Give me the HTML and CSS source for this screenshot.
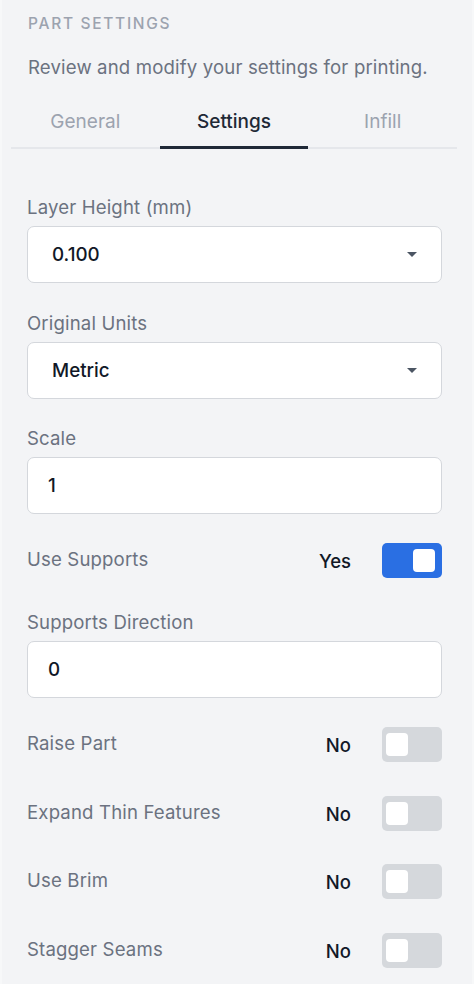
FILE: index.html
```html
<!DOCTYPE html>
<html lang="en">
<head>
<meta charset="utf-8">
<title>Part Settings</title>
<link rel="stylesheet" href="styles.css">
</head>
<body>
<div class="panel">
  <div class="header">
    <div class="eyebrow">Part Settings</div>
    <p class="subtitle">Review and modify your settings for printing.</p>
  </div>
  <div class="tabs">
    <div class="tab">General</div>
    <div class="tab active">Settings</div>
    <div class="tab">Infill</div>
  </div>
  <div class="form">
    <div class="field first">
      <div class="label">Layer Height (mm)</div>
      <div class="control select"><span class="value">0.100</span><span class="caret"></span></div>
    </div>
    <div class="field f2">
      <div class="label">Original Units</div>
      <div class="control select"><span class="value">Metric</span><span class="caret"></span></div>
    </div>
    <div class="field f3">
      <div class="label">Scale</div>
      <div class="control input"><span class="value">1</span></div>
    </div>
    <div class="switch-row s1">
      <div class="label">Use Supports</div>
      <div class="state">Yes</div>
      <div class="toggle on"><span class="knob"></span></div>
    </div>
    <div class="field f4">
      <div class="label">Supports Direction</div>
      <div class="control input"><span class="value">0</span></div>
    </div>
    <div class="switch-row s2">
      <div class="label">Raise Part</div>
      <div class="state">No</div>
      <div class="toggle"><span class="knob"></span></div>
    </div>
    <div class="switch-row s3">
      <div class="label">Expand Thin Features</div>
      <div class="state">No</div>
      <div class="toggle"><span class="knob"></span></div>
    </div>
    <div class="switch-row s4">
      <div class="label">Use Brim</div>
      <div class="state">No</div>
      <div class="toggle"><span class="knob"></span></div>
    </div>
    <div class="switch-row s3">
      <div class="label">Stagger Seams</div>
      <div class="state">No</div>
      <div class="toggle"><span class="knob"></span></div>
    </div>
  </div>
</div>
</body>
</html>
```

FILE: styles.css
```css
html, body {
  margin: 0;
  padding: 0;
  background: #f3f4f6;
}
body {
  font-family: Inter, "Noto Sans", "Liberation Sans", sans-serif;
  color: #111827;
}
.panel {
  width: 474px;
  height: 984px;
  box-sizing: border-box;
  border-left: 2px solid #f7f8f9;
  border-right: 2px solid #f7f8f9;
  background: #f3f4f6;
  overflow: hidden;
}
.header {
  padding: 14px 20px 0 26px;
}
.eyebrow {
  font-size: 15.5px;
  line-height: 20px;
  font-weight: 500;
  letter-spacing: 1.7px;
  text-transform: uppercase;
  color: #9ca3af;
}
.subtitle {
  margin: 21px 0 0;
  font-size: 18.6px;
  line-height: 24px;
  letter-spacing: 0.15px;
  color: #6b7280;
  white-space: nowrap;
}
.tabs {
  display: flex;
  margin: 18px 15px 0 9px;
  border-bottom: 2px solid #e5e7eb;
}
.tab {
  flex: 1;
  text-align: center;
  font-size: 19px;
  line-height: 24px;
  padding: 13px 0 12px;
  color: #9ca3af;
  border-bottom: 3px solid transparent;
  margin-bottom: -2px;
}
.tab.active {
  color: #1f2937;
  font-weight: 500;
  border-bottom-color: #1f2937;
}
.form {
  display: flex;
  flex-direction: column;
  padding: 0 30px 0 25px;
}
.label {
  font-size: 18.6px;
  line-height: 24px;
  letter-spacing: 0.15px;
  color: #6b7280;
  white-space: nowrap;
}
.field .label {
  margin-bottom: 7px;
}
.field.first { margin-top: 46px; }
.field.f2 { margin-top: 28px; }
.field.f3 { margin-top: 27px; }
.field.f4 { margin-top: 32px; }
.control {
  height: 57px;
  box-sizing: border-box;
  background: #ffffff;
  border: 1px solid #d4d7dc;
  border-radius: 7px;
  display: flex;
  align-items: center;
}
.select {
  padding: 0 24px 0 24px;
  justify-content: space-between;
}
.input {
  padding: 0 20px;
}
.value {
  font-size: 18.8px;
  font-weight: 500;
  color: #111827;
}
.caret {
  width: 0;
  height: 0;
  border-left: 5px solid transparent;
  border-right: 5px solid transparent;
  border-top: 5px solid #4b5563;
}
.switch-row {
  display: flex;
  align-items: center;
  height: 35px;
}
.switch-row .label {
  flex: 1;
  padding-bottom: 3px;
}
.s1 { margin-top: 29px; }
.s2 { margin-top: 29px; }
.s3 { margin-top: 34px; }
.s4 { margin-top: 33px; }
.state {
  font-size: 18.5px;
  font-weight: 500;
  color: #111827;
  margin-right: 31px;
}
.toggle {
  width: 60px;
  height: 35px;
  box-sizing: border-box;
  border-radius: 5px;
  background: #d5d8dc;
  padding: 6px 4px;
  display: flex;
  justify-content: flex-start;
}
.toggle.on {
  background: #2a6fe3;
  justify-content: flex-end;
  padding: 6px 7px;
}
.knob {
  width: 22px;
  height: 23px;
  border-radius: 4px;
  background: #ffffff;
}
```
